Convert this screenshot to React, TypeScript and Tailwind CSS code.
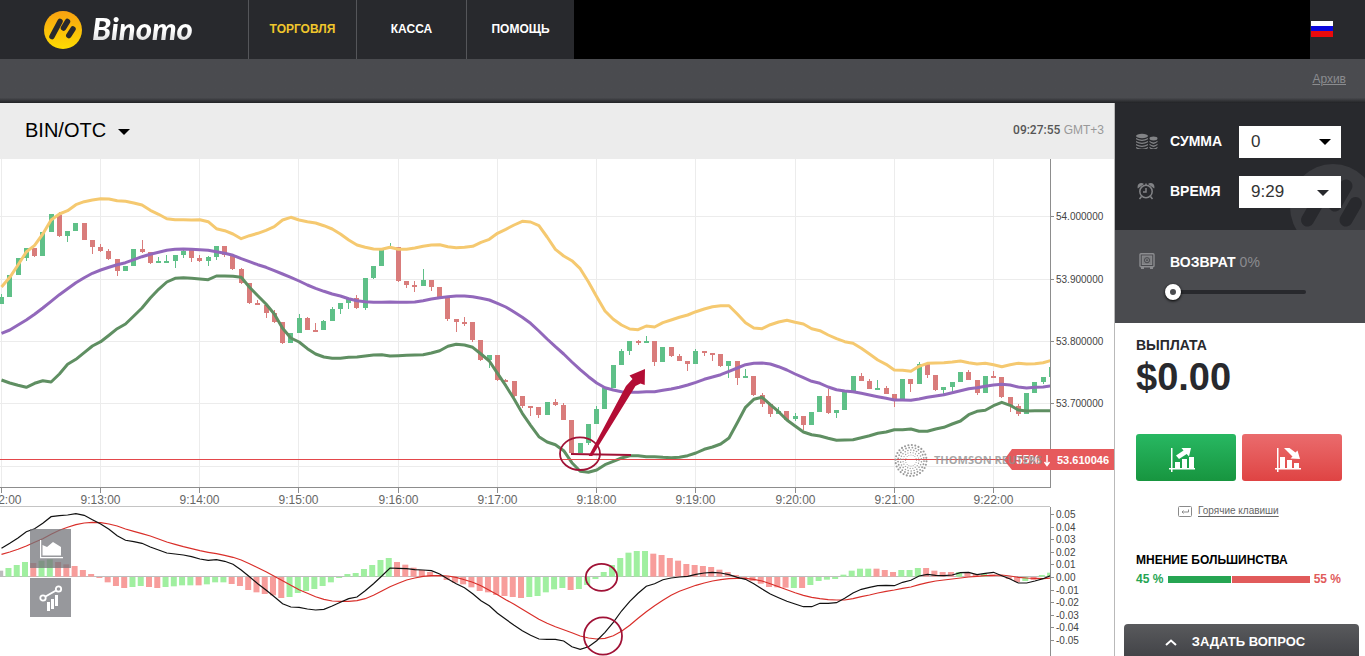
import React from "react";

const UP = "#5fc088";
const DOWN = "#d97c7b";
const STEP = 8.267;
const cx = (k: number) => 1.5 + STEP * k;

// Vertical data is stored in thirds of a chart unit.
const priceY = (v: number) => 1 + v / 3;
const macdY = (v: number) => 331 + v / 3;

type Candle = [up: 0 | 1, top: number, bottom: number, high?: number, low?: number];

const candles: Candle[] = [
  [1, 410, 432, 402], [1, 345, 411], [1, 294, 345], [1, 264, 294, 264, 304], [0, 264, 288, 264, 291], [1, 216, 288],
  [1, 162, 216], [0, 165, 228, 156, 231], [1, 213, 228, 213, 246], [1, 189, 213], [0, 189, 240], [0, 240, 261, 240, 282],
  [0, 261, 273, 252, 276], [0, 273, 297, 267, 300], [0, 297, 333, 297, 348], [1, 318, 333], [1, 267, 318], [0, 267, 276, 240, 279],
  [0, 277, 309, 277, 312], [1, 303, 308, 290], [1, 303, 308, 286], [1, 285, 303, 285, 324], [1, 272, 285, 264, 294], [0, 270, 294, 270, 306],
  [0, 294, 303, 286, 306], [1, 291, 303, 288, 318], [1, 258, 291, 258, 300], [0, 258, 286, 258, 291], [0, 288, 327, 288, 330], [0, 327, 369, 324, 372],
  [0, 369, 429, 369, 432], [0, 429, 435, 420], [0, 435, 459, 435, 474], [0, 459, 486, 450, 489], [0, 486, 549, 486, 552], [1, 519, 549],
  [1, 474, 519, 462], [0, 474, 510, 470], [0, 510, 516, 489], [1, 483, 510, 480], [1, 447, 483, 441], [1, 429, 447, 429, 462],
  [1, 417, 429, 417, 447], [0, 414, 444, 405, 447], [1, 354, 444, 354, 450], [1, 318, 354, 318, 357], [1, 270, 318], [1, 261, 267, 248],
  [0, 261, 363, 261, 366], [0, 363, 375, 363, 383], [0, 375, 381, 363, 396], [1, 360, 378, 327], [0, 360, 381, 360, 393], [0, 381, 410],
  [0, 411, 477, 411, 484], [0, 477, 486, 477, 516], [0, 486, 492, 470, 496], [0, 486, 540, 486, 546], [0, 540, 600, 540, 603], [1, 585, 600, 585, 624],
  [0, 585, 660, 585, 663], [0, 660, 666, 657], [0, 663, 708, 663, 711], [0, 708, 738, 708, 744], [0, 738, 744, 738, 768], [0, 741, 765, 741, 774],
  [1, 726, 765], [0, 726, 735, 717, 738], [0, 735, 780, 729], [0, 780, 880], [1, 849, 880], [1, 792, 849, 792, 854],
  [1, 747, 792, 738], [1, 684, 747], [1, 615, 684], [1, 573, 615, 567], [1, 543, 573, 543, 585], [0, 543, 549, 540, 555],
  [1, 543, 549, 528], [0, 543, 606, 543, 618], [1, 561, 606], [0, 561, 588, 561, 591], [0, 588, 603, 582], [0, 603, 612, 603, 633],
  [1, 573, 612, 566], [0, 573, 579, 573, 588], [0, 579, 585, 579, 603], [0, 582, 618, 582, 621], [1, 603, 618, 603, 654], [0, 603, 654, 603, 674],
  [1, 648, 654, 628], [0, 648, 705, 648, 708], [0, 705, 732, 699, 742], [0, 732, 762, 732, 770], [1, 753, 762, 741], [0, 753, 780],
  [1, 768, 777, 760, 784], [0, 768, 795, 768, 810], [1, 756, 795], [1, 708, 756], [0, 708, 759, 687, 762], [1, 750, 759, 750, 774],
  [1, 693, 750], [1, 648, 693], [0, 648, 663, 639], [0, 663, 687, 657], [1, 684, 690, 660], [0, 684, 702, 678],
  [0, 702, 717, 702, 741], [1, 657, 717], [0, 657, 672, 657, 696], [1, 612, 672, 606], [0, 612, 645, 612, 654], [0, 645, 690, 645, 693],
  [1, 681, 690, 681, 702], [1, 666, 681, 666, 699], [1, 636, 666], [0, 636, 660, 630], [0, 660, 699, 660, 705], [1, 648, 699],
  [0, 648, 654, 633], [0, 651, 711, 651, 714], [0, 711, 738, 711, 756], [0, 738, 762, 732, 768], [1, 699, 762], [1, 666, 699],
  [1, 651, 666, 651, 672], [1, 621, 651],
];

const upperBand = [
  381, 352, 315, 276, 256, 222, 180, 162, 152, 134, 125, 120, 116, 117, 122, 124, 129, 135, 151, 163, 176, 179, 179, 180, 179, 185, 206, 212, 222, 236, 227, 220,
  211, 200, 180, 172, 180, 185, 189, 197, 207, 222, 240, 255, 262, 267, 268, 262, 268, 268, 264, 259, 255, 254, 260, 263, 262, 259, 247, 238, 220, 208, 195, 184,
  186, 197, 231, 268, 288, 302, 326, 366, 410, 453, 478, 495, 507, 509, 498, 501, 488, 480, 472, 465, 455, 447, 440, 437, 437, 462, 488, 504, 506, 494, 486, 481,
  487, 492, 506, 512, 525, 536, 545, 550, 565, 582, 600, 613, 630, 631, 634, 619, 610, 609, 608, 606, 603, 608, 612, 610, 614, 620, 614, 610, 612, 611, 608, 601,
];

const middleBand = [
  520, 510, 495, 480, 463, 444, 424, 404, 386, 368, 353, 340, 330, 322, 314, 308, 299, 290, 283, 277, 271, 268, 267, 268, 269, 271, 275, 280, 286, 296, 305, 314,
  322, 332, 342, 352, 363, 375, 385, 394, 402, 408, 416, 422, 425, 427, 427, 426, 427, 427, 426, 422, 417, 413, 410, 408, 408, 410, 415, 420, 430, 441, 456, 472,
  490, 513, 537, 560, 582, 606, 629, 650, 669, 683, 690, 695, 697, 697, 695, 695, 691, 687, 682, 675, 667, 658, 651, 644, 634, 624, 614, 610, 609, 612, 620, 630,
  642, 653, 664, 670, 681, 689, 693, 695, 700, 705, 710, 715, 720, 720, 721, 717, 712, 708, 704, 698, 692, 686, 683, 679, 675, 673, 675, 681, 684, 682, 681, 677,
];

const lowerBand = [
  660, 669, 676, 682, 670, 662, 666, 642, 613, 598, 578, 558, 545, 526, 506, 492, 468, 444, 414, 388, 366, 355, 353, 355, 357, 359, 348, 348, 349, 352, 382, 407,
  432, 462, 505, 534, 546, 566, 582, 591, 595, 595, 592, 591, 588, 585, 584, 588, 587, 586, 585, 584, 579, 572, 559, 553, 555, 562, 582, 603, 640, 677, 717, 760,
  796, 830, 846, 854, 872, 908, 934, 937, 930, 914, 904, 894, 887, 887, 890, 890, 892, 893, 892, 887, 879, 868, 861, 852, 834, 788, 742, 718, 712, 734, 755, 780,
  798, 816, 824, 828, 835, 841, 840, 839, 833, 827, 820, 816, 809, 809, 807, 814, 814, 807, 802, 792, 783, 764, 754, 751, 737, 727, 736, 750, 753, 752, 752, 752,
];

const macdLine = [
  175, 160, 144, 125, 116, 100, 80, 77, 75, 71, 76, 89, 102, 118, 137, 151, 155, 160, 171, 180, 189, 192, 195, 200, 207, 211, 209, 214, 223, 240, 260, 281,
  300, 320, 341, 351, 352, 357, 360, 358, 348, 337, 326, 321, 302, 281, 258, 234, 235, 236, 239, 240, 242, 252, 267, 281, 293, 311, 332, 347, 370, 388, 406, 422,
  436, 447, 448, 448, 453, 470, 478, 470, 452, 427, 397, 363, 334, 310, 289, 281, 269, 264, 261, 259, 253, 249, 247, 249, 254, 262, 268, 281, 297, 312, 323, 334,
  342, 350, 350, 340, 340, 338, 325, 309, 298, 292, 287, 286, 287, 277, 271, 258, 253, 256, 257, 255, 248, 247, 254, 250, 247, 257, 267, 279, 279, 273, 266, 256,
];

const signalLine = [
  193, 186, 178, 168, 157, 146, 133, 121, 112, 104, 99, 97, 98, 102, 108, 117, 124, 131, 138, 147, 156, 163, 170, 176, 182, 187, 191, 196, 202, 210, 221, 233,
  245, 259, 272, 286, 299, 310, 320, 328, 333, 334, 334, 332, 326, 316, 303, 290, 280, 270, 264, 259, 257, 257, 258, 262, 269, 277, 287, 301, 314, 329, 343, 358,
  373, 388, 400, 410, 419, 428, 438, 444, 447, 445, 437, 424, 406, 385, 365, 347, 331, 316, 304, 295, 286, 279, 273, 269, 266, 265, 265, 268, 273, 281, 290, 299,
  308, 316, 322, 326, 329, 330, 330, 326, 320, 315, 309, 304, 300, 295, 291, 284, 278, 273, 270, 267, 264, 261, 259, 257, 256, 255, 258, 262, 264, 265, 266, 264,
];

const histogram = [
  18, 26, 35, 44, 41, 48, 52, 44, 37, 32, 20, 8, -3, -16, -27, -33, -30, -27, -30, -33, -30, -28, -25, -25, -25, -22, -16, -16, -21, -27, -39, -46,
  -51, -55, -63, -60, -48, -42, -36, -27, -16, -3, 8, 11, 23, 35, 50, 56, 44, 36, 27, 20, 14, 5, -9, -17, -22, -31, -42, -46, -54, -57, -60, -63,
  -60, -57, -46, -37, -33, -39, -36, -24, -6, 14, 35, 56, 72, 77, 77, 69, 65, 56, 48, 38, 35, 32, 29, 21, 14, 5, -6, -12, -20, -30, -31, -32,
  -33, -33, -24, -12, -8, -6, 6, 18, 24, 24, 24, 20, 14, 20, 20, 26, 26, 18, 14, 14, 14, 12, 8, 8, 6, 3, -6, -15, -12, -9, 5, 12,
];
const fallingBars = new Set([
  4, 7, 8, 9, 10, 11, 12, 13, 14, 15, 18, 19, 24, 28, 29, 30, 31, 32, 33, 34, 48, 49, 50, 51, 52, 53, 54, 55, 56, 57, 58, 59, 60, 61, 62, 63, 69,
  79, 80, 81, 82, 83, 84, 85, 86, 87, 88, 89, 90, 91, 92, 93, 94, 95, 97, 106, 107, 108, 112, 113, 114, 115, 117, 118, 120, 121, 122, 123, 125,
]);

const points = (data: number[], y: (v: number) => number) =>
  data.map((v, k) => `${cx(k).toFixed(1)},${y(v).toFixed(1)}`).join(" ");

const times = ["9:12:00", "9:13:00", "9:14:00", "9:15:00", "9:16:00", "9:17:00", "9:18:00", "9:19:00", "9:20:00", "9:21:00", "9:22:00"];
const timeX = [1.5, 100.5, 199.5, 298.5, 398.5, 497.5, 596.5, 695.5, 795.5, 894.5, 993.5];
const prices: [string, number][] = [["54.000000", 57.5], ["53.900000", 120.5], ["53.800000", 182.5], ["53.700000", 244.5]];
const macdTicks = ["0.05", "0.04", "0.03", "0.02", "0.01", "0.00", "-0.01", "-0.02", "-0.03", "-0.04", "-0.05"];

function Caret({ className = "" }: { className?: string }) {
  return (
    <svg aria-hidden="true" viewBox="0 0 12 6" className={`h-[6px] w-3 ${className}`}>
      <path d="M0 0H12L6 6Z" fill="currentColor" />
    </svg>
  );
}

function Chart() {
  const dots: React.ReactNode[] = [];
  [5.5, 8, 10.5, 13, 15.5].forEach((r, ring) => {
    const n = 16 + ring * 3;
    for (let i = 0; i < n; i++) {
      const a = (i / n) * Math.PI * 2 + ring * 0.35;
      dots.push(<circle key={`${ring}-${i}`} cx={911 + r * Math.cos(a)} cy={301.5 + r * Math.sin(a)} r={0.5 + ring * 0.14} />);
    }
  });
  return (
    <svg viewBox="0 0 1114 497" className="block h-auto w-full font-['Liberation_Sans',sans-serif]" role="img" aria-label="BIN/OTC">
      <defs>
        <clipPath id="plot"><rect x="0" y="0" width="1050" height="497" /></clipPath>
      </defs>
      <g stroke="#ececec" shapeRendering="crispEdges">
        {[57.5, 120.5, 182.5, 244.5, 307.5].map((y) => <path key={y} d={`M0 ${y}H1050`} />)}
        {timeX.map((x) => <path key={x} d={`M${x} 0V328`} />)}
      </g>
      <g clipPath="url(#plot)">
        {candles.map(([up, top, bottom, high = top, low = bottom], k) => {
          const x = Math.round(cx(k) - 0.5);
          const y = Math.round(priceY(top));
          return (
            <g key={k} fill={up ? UP : DOWN} shapeRendering="crispEdges">
              <rect x={x} y={Math.round(priceY(high))} width="1" height={Math.round((low - high) / 3)} />
              <rect x={x - 2} y={y} width="5" height={Math.max(2, Math.round(priceY(bottom)) - y)} />
            </g>
          );
        })}
        <g fill="none" strokeWidth="3" strokeLinejoin="round">
          <polyline points={points(lowerBand, priceY)} stroke="#5f8f62" />
          <polyline points={points(middleBand, priceY)} stroke="#9268bb" />
          <polyline points={points(upperBand, priceY)} stroke="#f5c970" />
        </g>
        <rect x="0" y="300" width="1050" height="1" fill="#e4484b" shapeRendering="crispEdges" />
        <path d="M0 417.5H1050" stroke="#bdbdbd" shapeRendering="crispEdges" />
        {histogram.map((v, k) => (
          <rect
            key={k}
            x={cx(k) - 4.3}
            y={v > 0 ? macdY(260 - v) : 418}
            width="6"
            height={Math.abs(v) / 3}
            fill={k === 0 ? "#bcbcbc" : fallingBars.has(k) ? "#f79d9b" : "#a0efa0"}
          />
        ))}
        <polyline points={points(signalLine, macdY)} fill="none" stroke="#d92f2a" strokeWidth="1.2" />
        <polyline points={points(macdLine, macdY)} fill="none" stroke="#111" strokeWidth="1.2" />
      </g>

      <g stroke="#8d8d8d" fill="none" shapeRendering="crispEdges">
        <path d="M0 328.5H1050.5V0" />
        <path d="M1050.5 347.5V497" />
        {timeX.map((x) => <path key={x} d={`M${x} 329V334`} />)}
        {prices.map(([, y]) => <path key={y} d={`M1051 ${y}H1054`} />)}
        {macdTicks.map((t, i) => <path key={t} d={`M1051 ${Math.round(355 + i * 12.6)}.5H1054`} />)}
        <path d="M0 347.5H1050" stroke="#c4c4c4" />
      </g>
      <g fontSize="12" fill="#666" textAnchor="middle">
        {times.map((t, i) => <text key={t} x={timeX[i]} y="345">{t}</text>)}
      </g>
      <g fontSize="10" fill="#444">
        {prices.map(([t, y]) => <text key={t} x="1056" y={y + 3.5}>{t}</text>)}
        {macdTicks.map((t, i) => <text key={t} x="1056" y={Math.round(355 + i * 12.6) + 4}>{t}</text>)}
      </g>

      <path d="M1004 301L1012 290H1114V311H1012Z" fill="#e65a5c" />
      <g fontSize="12" fontWeight="700" fill="#fff">
        <text x="1016" y="305">55%</text>
        <text x="1057" y="305" fontSize="11">53.610046</text>
        <path d="M1047 296V306M1044.500 303L1047 306.500L1049.500 303" stroke="#fff" strokeWidth="1.500" fill="none" />
      </g>
      <g fill="#9a9a9a">{dots}</g>
      <text x="934" y="305" fontSize="11" fontWeight="700" fill="#8f8f8f" fillOpacity="0.8" className="font-['Open_Sans',sans-serif]">THOMSON REUTERS</text>

      <g fill="none" stroke="#a01236" strokeWidth="1.800">
        <ellipse cx="580" cy="294.700" rx="20" ry="16.300" />
        <path d="M571 295L631 296" strokeWidth="2" />
        <ellipse cx="601.500" cy="418.300" rx="15.700" ry="13.500" />
        <ellipse cx="603" cy="477" rx="19" ry="18.700" />
      </g>
      <path d="M588.700 297L626 227L632.500 220L629.500 216.500L645 210L644.700 226L640.500 224.500L635.500 227L592.300 297Z" fill="#b30d35" />
    </svg>
  );
}

const stack = (x: number, top: number, w: number, rows: number) =>
  Array.from({ length: rows }, (_, i) => (
    <path key={i} d={`M${x} ${top + i * 3}q${w / 2} 3.400 ${w} 0v1.300q${-w / 2} 3.600 ${-w} 0z`} />
  ));

function CoinsIcon() {
  return (
    <svg aria-hidden="true" viewBox="0 0 22 16" className="h-4 w-[22px]" fill="#828386">
      <ellipse cx="6" cy="3" rx="6" ry="2.200" />
      {stack(0, 5, 12, 4)}
      <ellipse cx="17.500" cy="5.500" rx="4" ry="1.900" />
      {stack(13.5, 7.8, 8, 3)}
    </svg>
  );
}

function ClockIcon() {
  return (
    <svg aria-hidden="true" viewBox="0 0 18 18" className="h-[18px] w-[18px]" fill="none" stroke="#828386" strokeWidth="1.500">
      <circle cx="9" cy="9.500" r="6.200" />
      <path d="M9 6V10H6" />
      <path d="M4.500 14.500L2.500 17M13.500 14.500L15.500 17M9 1.500V3" />
      <path d="M0.800 6.500C-0.500 2.500 3.500 -0.500 7 2ZM17.200 6.500C18.500 2.500 14.500 -0.500 11 2Z" fill="#828386" stroke="none" />
    </svg>
  );
}

function SafeIcon() {
  return (
    <svg aria-hidden="true" viewBox="0 0 16 16" className="h-4 w-4" fill="none" stroke="#8b8c8f">
      <rect x="1" y="0.700" width="14" height="13" rx="1" strokeWidth="1.400" />
      <rect x="3.300" y="3" width="9.400" height="8.500" fill="#7d7e81" />
      <circle cx="8" cy="7.200" r="2.600" stroke="#4a4b4f" />
      <circle cx="8" cy="7.200" r="0.900" fill="#4a4b4f" stroke="none" />
      <path d="M2 15h3M11 15h3" strokeWidth="1.800" />
    </svg>
  );
}

function TradeIcon({ down = false }: { down?: boolean }) {
  return (
    <svg aria-hidden="true" viewBox="0 0 26 26" className="h-[26px] w-[26px]" fill="#fff">
      <path d="M2 1h1.500v20H26v1.500H3.500V25H2v-2.500H0V21h2z" />
      {down ? (
        <>
          <path d="M5 10h5v11H5zM12 13h5v8h-5zM19 16h5v5h-5z" />
          <path d="M9 1H14.500L20.500 5.500L22.500 3.500L25 12L15.500 11.500L17.500 9.500Z" />
        </>
      ) : (
        <>
          <path d="M6 15h5v6H6zM13 12h5v9h-5zM20 10h5v11h-5z" />
          <path d="M7 8.500L14.500 3.500L12.500 1H22L20 9.500L17.700 7L10 12Z" />
        </>
      )}
    </svg>
  );
}

function Header() {
  const nav = "flex h-full items-center justify-center border-l border-[#55565a] pb-[2px] text-[12px] font-bold";
  return (
    <header className="flex h-[59px] bg-[#28292d] text-white">
      <a href="#" aria-label="Binomo" className="flex w-[248px] items-center gap-[10px] pl-[44px]">
        <svg aria-hidden="true" viewBox="0 0 38 38" className="h-[38px] w-[38px]">
          <defs>
            <linearGradient id="sun" x2="0" y2="1"><stop stopColor="#f9a111" /><stop offset="1" stopColor="#fddc02" /></linearGradient>
          </defs>
          <circle cx="19" cy="19" r="19" fill="url(#sun)" />
          <path d="M8 25.500L16 10.500M19.500 17L23.500 10.500M24.800 24.500L29 18" stroke="#28292d" strokeWidth="5.500" strokeLinecap="round" />
        </svg>
        <span className="bg-gradient-to-b from-white from-50% to-[#bfc0c2] bg-clip-text pr-1 pb-1 font-['Lato',sans-serif] text-[31px] leading-9 font-black text-transparent italic">
          Binomo
        </span>
      </a>
      <nav className="flex">
        <a href="#" className={`${nav} w-[108px] text-[#f0c62c]`}>ТОРГОВЛЯ</a>
        <a href="#" className={`${nav} w-[110px]`}>КАССА</a>
        <a href="#" className={`${nav} w-[108px]`}>ПОМОЩЬ</a>
      </nav>
      <div className="flex-1 bg-black" />
      <button type="button" aria-label="Русский" className="flex w-[55px] items-center pb-[2px] pl-px">
        <svg aria-hidden="true" viewBox="0 0 22 16" className="h-4 w-[22px]">
          <path d="M0 0h22v5H0z" fill="#fff" /><path d="M0 5h22v5H0z" fill="#0b08dc" /><path d="M0 10h22v6H0z" fill="#ea0a0c" />
        </svg>
      </button>
    </header>
  );
}

function Sidebar() {
  const label = "w-[69px] pb-[2px] text-[14px] font-bold text-white";
  const select = "h-8 w-full appearance-none rounded-none bg-white pl-3 text-[17px] text-[#333]";
  return (
    <aside className="flex w-[250px] shrink-0 flex-col bg-white">
      <section className="relative h-[127px] overflow-hidden bg-[#28292d] pt-[23px]">
        <svg aria-hidden="true" viewBox="0 0 86 86" className="absolute top-[61px] left-[175px] h-[86px] w-[86px]">
          <circle cx="43" cy="43" r="43" fill="#3a3b3f" />
          <path d="M17.500 56L36 24M45 41L56 22M56 56L65.500 39.500" stroke="#28292d" strokeWidth="13" strokeLinecap="round" />
        </svg>
        <div className="relative flex flex-col gap-[18px] pl-5">
          <div className="flex h-8 items-center">
            <span className="flex w-[35px] pb-[2px] pl-px"><CoinsIcon /></span>
            <label htmlFor="amount" className={label}>СУММА</label>
            <div className="relative w-[102px]">
              <select id="amount" className={select}><option>0</option></select>
              <Caret className="pointer-events-none absolute top-[13px] right-[10px] text-black" />
            </div>
          </div>
          <div className="flex h-8 items-center">
            <span className="flex w-[35px] pb-[2px] pl-[2px]"><ClockIcon /></span>
            <label htmlFor="time" className={label}>ВРЕМЯ</label>
            <div className="relative w-[102px]">
              <select id="time" className={select}><option>9:29</option></select>
              <Caret className="pointer-events-none absolute top-[14px] right-3 text-[#28292d]" />
            </div>
          </div>
        </div>
      </section>

      <section className="h-[93px] bg-[#4a4b4f] pt-[22px] pl-5">
        <div className="flex h-5 items-center">
          <span className="flex w-[35px] pb-[2px] pl-1"><SafeIcon /></span>
          <label htmlFor="refund" className="text-[14px] font-bold text-white">ВОЗВРАТ</label>
          <output htmlFor="refund" className="ml-1 text-[14px] text-[#8b8c8f]">0%</output>
        </div>
        <input
          id="refund"
          type="range"
          min="0"
          max="100"
          defaultValue="0"
          className="mt-3 ml-[30px] block h-4 w-[141px] appearance-none bg-transparent [&::-webkit-slider-runnable-track]:h-1 [&::-webkit-slider-runnable-track]:rounded-full [&::-webkit-slider-runnable-track]:bg-[#28292d] [&::-webkit-slider-thumb]:-mt-[6px] [&::-webkit-slider-thumb]:h-4 [&::-webkit-slider-thumb]:w-4 [&::-webkit-slider-thumb]:appearance-none [&::-webkit-slider-thumb]:rounded-full [&::-webkit-slider-thumb]:border-[5px] [&::-webkit-slider-thumb]:border-white [&::-webkit-slider-thumb]:bg-[#4a4b4f] [&::-webkit-slider-thumb]:shadow-[0_1px_3px_#000]"
        />
      </section>

      <section className="px-[21px] pt-3 text-[#28292d]">
        <h2 className="text-[14px] leading-5 font-bold">ВЫПЛАТА</h2>
        <p className="text-[38px] leading-11 font-bold">$0.00</p>
        <div className="mt-[35px] flex gap-[6px]">
          <button type="button" aria-label="Выше" className="flex h-[47px] w-[100px] items-center justify-center rounded-[3px] bg-gradient-to-b from-[#28b862] to-[#17953f] pt-1 pr-2">
            <TradeIcon />
          </button>
          <button type="button" aria-label="Ниже" className="flex h-[47px] w-[100px] items-center justify-center rounded-[3px] bg-gradient-to-b from-[#ea6b6d] to-[#df4343] pt-1 pr-2">
            <TradeIcon down />
          </button>
        </div>
        <a href="#" className="mt-[22px] flex items-center gap-[6px] pl-[42px] text-[10px] leading-4 text-[#666]">
          <svg aria-hidden="true" viewBox="0 0 14 11" className="h-[11px] w-[14px]" fill="none" stroke="#8a8a8a">
            <rect x="0.500" y="0.500" width="13" height="10" rx="1" />
            <path d="M10.500 3.500V6H4M5.500 4.500L4 6L5.500 7.500" />
          </svg>
          <span className="underline underline-offset-2">Горячие клавиши</span>
        </a>
        <h2 className="mt-[31px] text-[12px] leading-5 font-bold text-black">МНЕНИЕ БОЛЬШИНСТВА</h2>
        <div className="flex h-[18px] items-center gap-1 pr-[3px] text-[12px] font-bold">
          <span className="pr-px text-[#26a552]">45 %</span>
          <div className="flex h-[7px] flex-1 gap-px">
            <span className="grow-45 bg-[#26a552]" />
            <span className="grow-55 bg-[#e15b5b]" />
          </div>
          <span className="text-[#e15b5b]">55 %</span>
        </div>
      </section>

      <button type="button" className="mt-auto mr-[6px] ml-[9px] flex h-8 items-center justify-center gap-[15px] rounded-t-[4px] bg-gradient-to-b from-[#595a5d] to-[#434448] pt-1 pr-[13px] text-[13px] font-bold text-white">
        <svg aria-hidden="true" viewBox="0 0 12 7" className="h-[7px] w-3" fill="none" stroke="#fff" strokeWidth="2">
          <path d="M1 6L6 1.500L11 6" />
        </svg>
        ЗАДАТЬ ВОПРОС
      </button>
    </aside>
  );
}

export default function App() {
  const tool = "flex h-[39px] w-[41px] items-center justify-center bg-[#74767b]/75";
  return (
    <div className="flex min-h-screen flex-col bg-white font-['Liberation_Sans',Arial,sans-serif]">
      <Header />
      <div className="flex h-11 items-start justify-end bg-gradient-to-b from-[#4a4b4f] from-88% to-[#222326] pt-3 pr-[19px]">
        <a href="#" className="text-[12px] leading-4 text-[#8b8c8f] underline">Архив</a>
      </div>
      <div className="flex flex-1">
        <main className="min-w-0 flex-1 border-r border-[#b9b9b9]">
          <div className="flex h-14 items-center justify-between bg-[#ececec] pr-[10px] pb-[2px] pl-[25px]">
            <button type="button" className="flex items-center gap-3 text-[20px] text-black">
              BIN/OTC <Caret className="mt-1" />
            </button>
            <p className="text-[12px] text-[#999]">
              <span className="font-['Roboto',sans-serif] font-medium text-[#555]">09:27:55</span> GMT+3
            </p>
          </div>
          <div className="relative">
            <Chart />
            <div className="absolute top-[370px] left-[30px] flex flex-col gap-[10px]">
              <button type="button" aria-label="Тип графика" className={tool}>
                <svg aria-hidden="true" viewBox="0 0 24 20" className="h-5 w-6" fill="#fff">
                  <path d="M1 1H2.200V18H24V19.200H1ZM3.500 6L8 8L14 3L22 8V16.500H3.500Z" />
                </svg>
              </button>
              <button type="button" aria-label="Индикаторы" className={tool}>
                <svg aria-hidden="true" viewBox="0 0 24 28" className="h-7 w-6" fill="none" stroke="#fff" strokeWidth="1.800">
                  <circle cx="4" cy="14" r="2.700" /><circle cx="19.500" cy="5" r="2.700" />
                  <path d="M6.500 12.500L17 6.500" strokeWidth="2" />
                  <path d="M9.500 18V27M13.500 15V25M17.500 11V22" strokeWidth="3" />
                </svg>
              </button>
            </div>
          </div>
        </main>
        <Sidebar />
      </div>
    </div>
  );
}
